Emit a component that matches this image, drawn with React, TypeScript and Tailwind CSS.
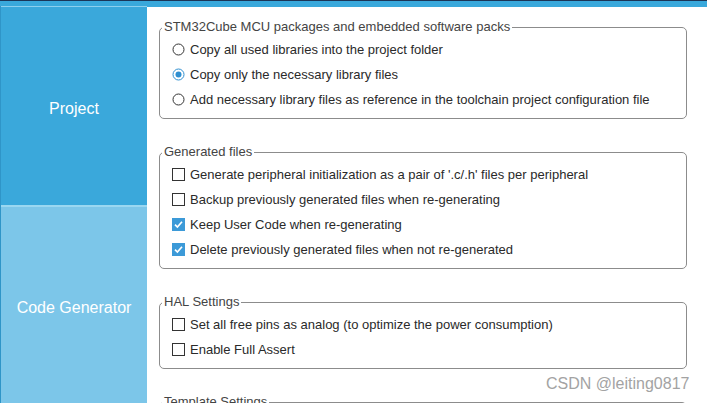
import React from "react";

const font = { fontFamily: '"Liberation Sans", Arial, sans-serif' };

function Radio({ checked }: { checked?: boolean }) {
  return (
    <svg width="13" height="13" viewBox="0 0 13 13" className="shrink-0">
      <circle cx="6.5" cy="6.5" r="5.5" fill="#fff" stroke={checked ? "#2f8fd0" : "#333"} strokeWidth="1" />
      {checked && <circle cx="6.5" cy="6.5" r="3" fill="#2f8fd0" />}
    </svg>
  );
}

function Check({ checked }: { checked?: boolean }) {
  return (
    <svg width="13" height="13" viewBox="0 0 13 13" className="shrink-0">
      {checked ? (
        <>
          <rect x="0.5" y="0.5" width="12" height="12" fill="#3c9ad8" stroke="#3c9ad8" />
          <path d="M3 6.6 L5.4 9 L10 3.8" fill="none" stroke="#fff" strokeWidth="1.7" />
        </>
      ) : (
        <rect x="0.5" y="0.5" width="12" height="12" fill="#fff" stroke="#333" />
      )}
    </svg>
  );
}

function Group({ title, children }: { title: string; children?: React.ReactNode }) {
  return (
    <fieldset className="border border-[#8c8c8c] rounded-[5px] pb-[6px]">
      <legend className="ml-[2px] px-[2px] text-[13px] leading-[16px] text-[#444]">{title}</legend>
      <div className="flex flex-col pt-[2px]">{children}</div>
    </fieldset>
  );
}

function Row({ kind, checked, label }: { kind: "radio" | "check"; checked?: boolean; label: string }) {
  return (
    <div className="h-[25px] flex items-center gap-[5px] pl-[12px] text-[13px] text-[#2a2a2a]">
      {kind === "radio" ? <Radio checked={checked} /> : <Check checked={checked} />}
      <span>{label}</span>
    </div>
  );
}

export default function App() {
  return (
    <div className="relative w-[707px] h-[403px] overflow-hidden bg-white" style={font}>
      <div className="h-[6px] bg-[#39a8db] border-t border-[#1c3557]" />
      <div className="flex h-[397px]">
        <div className="w-[147px] shrink-0 flex flex-col border-l border-[#2f95c8]">
          <div className="h-[199px] shrink-0 bg-[#3aa8db] border-t border-[#8ccfee] flex items-center justify-center pt-[5px] text-white text-[16px]">
            Project
          </div>
          <div className="h-[210px] shrink-0 bg-[#7cc6e9] border-t-2 border-[#9ad7f1] flex justify-center pt-[89px] text-white text-[16px]">
            Code Generator
          </div>
        </div>
        <div className="flex-1 border-t border-[#39a8db] pl-[12px] pr-[20px] pt-[12px] flex flex-col gap-[25px]">
          <Group title="STM32Cube MCU packages and embedded software packs">
            <Row kind="radio" label="Copy all used libraries into the project folder" />
            <Row kind="radio" checked label="Copy only the necessary library files" />
            <Row kind="radio" label="Add necessary library files as reference in the toolchain project configuration file" />
          </Group>
          <Group title="Generated files">
            <Row kind="check" label="Generate peripheral initialization as a pair of '.c/.h' files per peripheral" />
            <Row kind="check" label="Backup previously generated files when re-generating" />
            <Row kind="check" checked label="Keep User Code when re-generating" />
            <Row kind="check" checked label="Delete previously generated files when not re-generated" />
          </Group>
          <Group title="HAL Settings">
            <Row kind="check" label="Set all free pins as analog (to optimize the power consumption)" />
            <Row kind="check" label="Enable Full Assert" />
          </Group>
          <Group title="Template Settings">
            <Row kind="check" label="" />
          </Group>
        </div>
      </div>
      <div className="absolute left-[546px] top-[374px] text-[16px] leading-[20px] text-[#a3a3a3]">CSDN @leiting0817</div>
    </div>
  );
}
